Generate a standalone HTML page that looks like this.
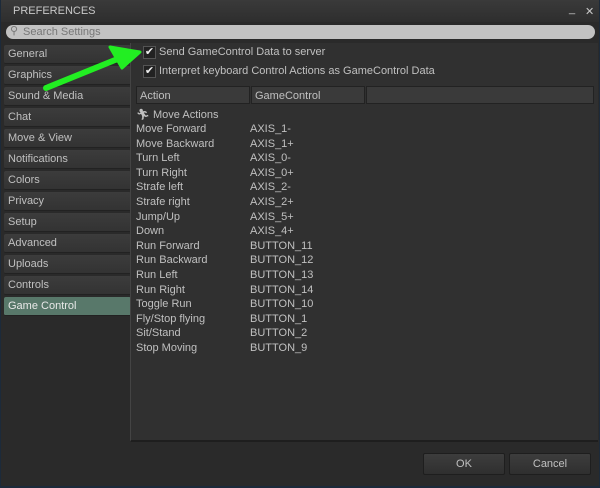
<!DOCTYPE html>
<html><head><style>
body{margin:0;width:600px;height:488px;background:#1c2a3a;font-family:"Liberation Sans","DejaVu Sans",sans-serif;font-size:11px;color:#c0c0c0;overflow:hidden;position:relative}
.win{position:absolute;left:1px;top:0;width:598px;height:486px;background:#2a2a2a}
.title{position:absolute;left:0;top:0;width:598px;height:22px;background:linear-gradient(#3a3a3a,#2e2e2e);}
.title span{position:absolute;left:12px;top:5px;font-size:11px;color:#c8c8c8}
.search{position:absolute;left:5px;top:25px;width:589px;height:14px;border-radius:7px;background:#c2c2c2;color:#777;font-size:11px;line-height:14px;padding-left:17px;box-sizing:border-box}
.side{position:absolute;left:3px;width:127px;height:19px;background:linear-gradient(#3c3c3c,#333);border-radius:2px;line-height:19px;padding-left:4px;box-sizing:border-box;border-bottom:1px solid #222}
.side.sel{background:#58786a;color:#e8e8e8}
.panel{position:absolute;left:129px;top:43px;width:467px;height:397px;background:#303030;border-left:1px solid #444;border-bottom:2px solid #1e1e1e}
.hdr{position:absolute;top:43px;height:18px;background:#3a3a3a;border:1px solid #222;line-height:18px;padding-left:3px;box-sizing:border-box}
.row{position:absolute;left:5px;height:14px}
.row b{font-weight:normal;position:absolute;left:114px;white-space:nowrap}
.cb{position:absolute;left:12px;width:11px;height:11px;background:#222;border:1px solid #555;color:#eee;font-size:11px;line-height:11px;text-align:center}
.btn{position:absolute;top:453px;width:80px;height:20px;background:linear-gradient(#3d3d3d,#2f2f2f);border:1px solid #1e1e1e;border-radius:2px;text-align:center;line-height:20px}
</style></head><body>
<div class="win">
<div class="title"><span>PREFERENCES</span><span style="left:568px;top:3px">_</span><span style="left:584px;top:5px">✕</span></div>
<div class="search"><span style="position:absolute;left:4px;top:-1px;color:#777">⚲</span>Search Settings</div>
<div class="side" style="top:45px">General</div>
<div class="side" style="top:66px">Graphics</div>
<div class="side" style="top:87px">Sound &amp; Media</div>
<div class="side" style="top:108px">Chat</div>
<div class="side" style="top:129px">Move &amp; View</div>
<div class="side" style="top:150px">Notifications</div>
<div class="side" style="top:171px">Colors</div>
<div class="side" style="top:192px">Privacy</div>
<div class="side" style="top:213px">Setup</div>
<div class="side" style="top:234px">Advanced</div>
<div class="side" style="top:255px">Uploads</div>
<div class="side" style="top:276px">Controls</div>
<div class="side sel" style="top:297px">Game Control</div>
<div class="panel">
<div class="cb" style="top:3px">✔</div><div style="position:absolute;left:28px;top:3px">Send GameControl Data to server</div>
<div class="cb" style="top:22px">✔</div><div style="position:absolute;left:28px;top:22px">Interpret keyboard Control Actions as GameControl Data</div>
<div class="hdr" style="left:5px;width:114px">Action</div>
<div class="hdr" style="left:120px;width:114px">GameControl</div>
<div class="hdr" style="left:235px;width:228px"></div>
<div class="row" style="top:65px">🏃︎&nbsp;Move Actions</div>
<div class="row" style="top:80px">Move Forward<b>AXIS_1-</b></div>
<div class="row" style="top:94.6px">Move Backward<b>AXIS_1+</b></div>
<div class="row" style="top:109.2px">Turn Left<b>AXIS_0-</b></div>
<div class="row" style="top:123.8px">Turn Right<b>AXIS_0+</b></div>
<div class="row" style="top:138.4px">Strafe left<b>AXIS_2-</b></div>
<div class="row" style="top:153px">Strafe right<b>AXIS_2+</b></div>
<div class="row" style="top:167.6px">Jump/Up<b>AXIS_5+</b></div>
<div class="row" style="top:182.2px">Down<b>AXIS_4+</b></div>
<div class="row" style="top:196.8px">Run Forward<b>BUTTON_11</b></div>
<div class="row" style="top:211.4px">Run Backward<b>BUTTON_12</b></div>
<div class="row" style="top:226px">Run Left<b>BUTTON_13</b></div>
<div class="row" style="top:240.6px">Run Right<b>BUTTON_14</b></div>
<div class="row" style="top:255.2px">Toggle Run<b>BUTTON_10</b></div>
<div class="row" style="top:269.8px">Fly/Stop flying<b>BUTTON_1</b></div>
<div class="row" style="top:284.4px">Sit/Stand<b>BUTTON_2</b></div>
<div class="row" style="top:299px">Stop Moving<b>BUTTON_9</b></div>
</div>
<div class="btn" style="left:422px">OK</div>
<div class="btn" style="left:508px">Cancel</div>
</div>
<svg style="position:absolute;left:0;top:0" width="600" height="488"><path d="M46 88 L120 58" stroke="#22ee22" stroke-width="6" stroke-linecap="round" fill="none"/><path d="M110 47 L140 52 L122 68 Z" fill="#22ee22" stroke="#22ee22" stroke-width="3" stroke-linejoin="round"/></svg>
</body></html>
